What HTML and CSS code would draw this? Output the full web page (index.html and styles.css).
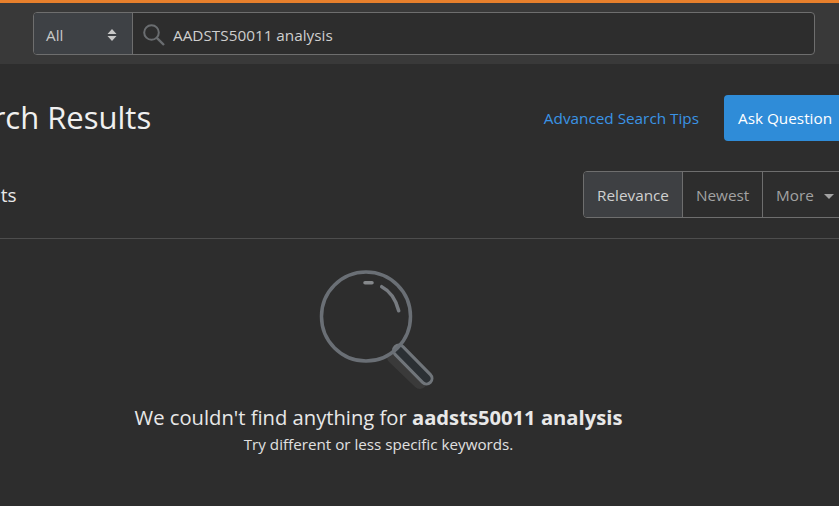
FILE: index.html
```html
<!DOCTYPE html>
<html lang="en">
<head>
<meta charset="UTF-8">
<meta name="viewport" content="width=device-width, initial-scale=1.0">
<title>Search Results</title>
<link rel="stylesheet" href="styles.css">
</head>
<body>

<!-- Top bar with search -->
<header class="top-bar">
  <form class="search">
    <div class="search-scope">
      <span>All</span>
      <svg class="scope-arrows" width="10" height="14" viewBox="0 0 10 14">
        <path d="M5 1 L9.5 6 H0.5 Z M5 13 L0.5 8 H9.5 Z" fill="#c8c8c8"/>
      </svg>
    </div>
    <div class="search-field">
      <svg class="search-icon" width="22" height="22" viewBox="0 0 22 22" fill="none" stroke="#6a6d70">
        <circle cx="8.5" cy="8.5" r="7.3" stroke-width="2"/>
        <path d="M13.8 13.8 L21 21" stroke-width="2.4"/>
      </svg>
      <span class="search-text">AADSTS50011 analysis</span>
    </div>
  </form>
</header>

<main class="content">
  <div class="headline">
    <h1 class="title">Search Results</h1>
    <div class="headline-actions">
      <a class="tips" href="#">Advanced Search Tips</a>
      <a class="ask-button" href="#">Ask Question</a>
    </div>
  </div>

  <div class="filter-row">
    <div class="count">0 results</div>
    <div class="sort-group">
      <button class="sort-btn active" type="button">Relevance</button>
      <button class="sort-btn" type="button">Newest</button>
      <button class="sort-btn more" type="button">More <span class="caret"></span></button>
    </div>
  </div>

  <!-- Empty state -->
  <section class="empty">
    <svg class="empty-icon" width="120" height="122" viewBox="0 0 120 122" fill="none" stroke-linecap="round">
      <path d="M75 87 L101 112" stroke="#3a3a3a" stroke-width="14"/>
      <path d="M80 80.5 L107.5 108.5" stroke="#70757a" stroke-width="14"/>
      <path d="M80 80.5 L107.5 108.5" stroke="#2b3034" stroke-width="8"/>
      <circle cx="47" cy="46.5" r="44.5" stroke="#6a6f75" stroke-width="3.5"/>
      <path d="M46 12.7 H53" stroke="#85888b" stroke-width="3.5"/>
      <path d="M62.7 16.7 C71 21 77 30 79.7 40.7" stroke="#777b80" stroke-width="3.5"/>
    </svg>
    <p class="empty-title">We couldn't find anything for <strong>aadsts50011 analysis</strong></p>
    <p class="empty-hint">Try different or less specific keywords.</p>
  </section>
</main>

</body>
</html>
```

FILE: styles.css
```css
html, body {
  margin: 0;
  height: 100%;
  overflow: hidden;
}

body {
  font-family: "Open Sans", "Noto Sans", Arial, sans-serif;
  background-color: #2d2d2d;
  color: #e8e8e8;
  font-size: 15.3px;
}

.top-bar {
  border-top: 3px solid #e8802c;
  background-color: #393939;
  padding: 9px 24px 9px 33px;
  height: 43px;
}

.search {
  display: flex;
  height: 43px;
  box-sizing: border-box;
  border: 1px solid #6e6e6e;
  border-radius: 4px;
  background-color: #2d2d2d;
}

.search-scope {
  width: 99px;
  box-sizing: border-box;
  flex: none;
  display: flex;
  align-items: center;
  justify-content: space-between;
  padding: 2px 15px 0 12px;
  background-color: #3e4145;
  border-right: 1px solid #6e6e6e;
  border-radius: 3px 0 0 3px;
  color: #c8c8c8;
}

.search-field {
  display: flex;
  align-items: center;
  padding: 2px 0 0 10px;
  color: #cfcfcf;
}

.search-icon {
  margin-right: 8px;
}

.content {
  width: 926px;
  margin-left: -59px;
}

.headline {
  display: flex;
  justify-content: space-between;
  align-items: center;
  height: 46px;
  margin-top: 31px;
}

.title {
  font-size: 31px;
  font-weight: 400;
  margin: 0 0 3px;
  color: #f0f0f0;
}

.headline-actions {
  display: flex;
  align-items: center;
}

.tips {
  color: #3a94e6;
  text-decoration: none;
  margin-right: 25px;
}

.ask-button {
  display: block;
  width: 143px;
  height: 46px;
  line-height: 46px;
  box-sizing: border-box;
  padding-left: 14px;
  background-color: #2f8cd8;
  color: #fff;
  text-decoration: none;
  border-radius: 4px;
}

.filter-row {
  display: flex;
  justify-content: space-between;
  align-items: center;
  margin-top: 30px;
  padding-bottom: 20px;
  border-bottom: 1px solid #4d4d4d;
}

.count {
  font-size: 19px;
  color: #e8e8e8;
}

.sort-group {
  display: flex;
  height: 47px;
  box-sizing: border-box;
  border: 1px solid #6e6e6e;
  border-radius: 4px;
}

.sort-btn {
  font: inherit;
  background: none;
  border: none;
  border-left: 1px solid #6e6e6e;
  color: #a2a2a2;
  padding: 0 13px;
  width: 80px;
}

.sort-btn.active {
  border-left: none;
  width: 98px;
  background-color: #3e4043;
  color: #d0d0d0;
  border-radius: 3px 0 0 3px;
}

.sort-btn.more {
  width: 104px;
  text-align: left;
  white-space: nowrap;
}

.caret {
  display: inline-block;
  margin-left: 6px;
  vertical-align: 2px;
  border-top: 5px solid #a2a2a2;
  border-left: 5px solid transparent;
  border-right: 5px solid transparent;
}

.empty {
  display: flex;
  flex-direction: column;
  align-items: center;
  width: 757px;
  margin-left: 59px;
  padding-top: 31px;
}

.empty-icon {
  display: block;
}

.empty-title {
  margin: 11px 0 0;
  font-size: 20.2px;
  white-space: nowrap;
  color: #e8e8e8;
}

.empty-hint {
  margin: 3px 0 0;
  font-size: 15.2px;
  color: #e0e0e0;
}
```
